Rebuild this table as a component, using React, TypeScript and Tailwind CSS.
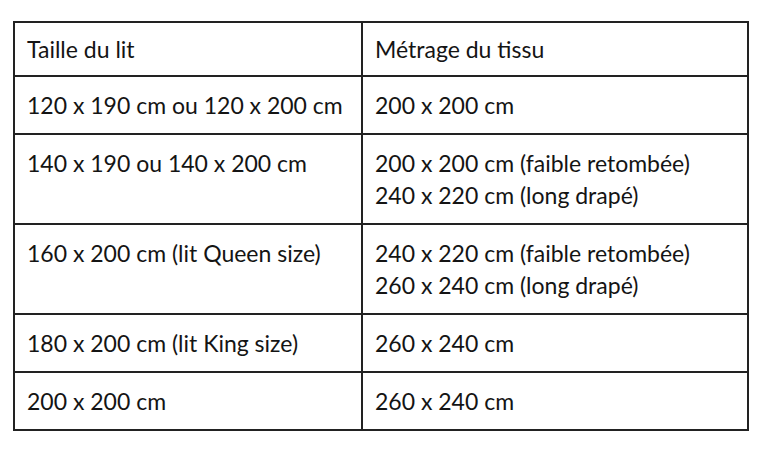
import React from 'react';

const rows: { size: string; fabric: string[] }[] = [
  { size: '120 x 190 cm ou 120 x 200 cm', fabric: ['200 x 200 cm'] },
  { size: '140 x 190 ou 140 x 200 cm', fabric: ['200 x 200 cm (faible retombée)', '240 x 220 cm (long drapé)'] },
  { size: '160 x 200 cm (lit Queen size)', fabric: ['240 x 220 cm (faible retombée)', '260 x 240 cm (long drapé)'] },
  { size: '180 x 200 cm (lit King size)', fabric: ['260 x 240 cm'] },
  { size: '200 x 200 cm', fabric: ['260 x 240 cm'] },
];

const App: React.FC = () => {
  return (
    <div className="w-[768px] h-[455px] bg-white pt-[21px] pl-[13px]" style={{ fontFamily: 'Lato, "Noto Sans", sans-serif' }}>
      <table className="w-[736px] border-collapse text-[23px] leading-[32px] text-[#141414]">
        <thead>
          <tr>
            <th className="w-[348px] border-2 border-[#222] pl-[12px] pr-3 py-[10px] text-left font-normal align-top">
              Taille du lit
            </th>
            <th className="border-2 border-[#222] pl-[12px] pr-3 py-[10px] text-left font-normal align-top">
              Métrage du tissu
            </th>
          </tr>
        </thead>
        <tbody>
          {rows.map((row) => (
            <tr key={row.size}>
              <td className="border-2 border-[#222] pl-[12px] pr-3 py-3 align-top">{row.size}</td>
              <td className="border-2 border-[#222] pl-[12px] pr-3 py-3 align-top">
                {row.fabric.map((line) => (
                  <div key={line}>{line}</div>
                ))}
              </td>
            </tr>
          ))}
        </tbody>
      </table>
    </div>
  );
};

export default App;
